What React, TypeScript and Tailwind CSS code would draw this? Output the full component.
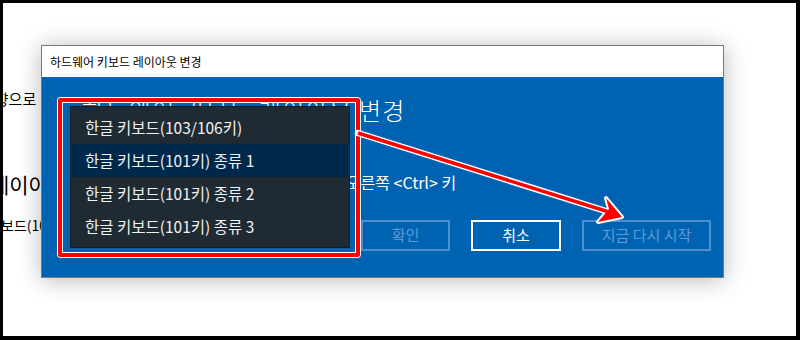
const KR = "font-['Noto_Sans_CJK_KR','Noto_Sans',sans-serif]";

const options = [
  '한글 키보드(103/106키)',
  '한글 키보드(101키) 종류 1',
  '한글 키보드(101키) 종류 2',
  '한글 키보드(101키) 종류 3',
];

export default function App() {
  return (
    <div className={`relative w-[800px] h-[340px] bg-black pt-[3px] pl-[3px] pr-[4px] pb-[4px] ${KR}`}>
      <div className="relative w-full h-full bg-white overflow-hidden">
        {/* page behind the dialog */}
        <div className="flex flex-col text-black">
          <div className="mt-[84px] -ml-[22px] text-[15px] leading-[24px]">방향으로</div>
          <div className="mt-[58px] -ml-[13px] text-[21px] leading-[30px]">레이아웃</div>
          <div className="mt-[16px] -ml-[2px] text-[14px] leading-[20px]">보드(101키)</div>
        </div>

        {/* dialog */}
        <div className="absolute left-[38px] top-[42px] w-[683px] h-[233px] flex flex-col border border-[#7a7a7a] shadow-[0_2px_22px_rgba(0,0,0,0.28)]">
          <div className="h-[31px] bg-white flex items-center pl-[8px] text-[12px] text-black">
            하드웨어 키보드 레이아웃 변경
          </div>
          <div className="relative flex-1 bg-[#0063b1] text-white flex flex-col pl-[40px] pr-[12px]">
            <div className="mt-[17px] text-[24px] leading-[32px] font-light tracking-[1.3px]">
              하드웨어 키보드 레이아웃 변경
            </div>
            <div className="mt-[45px] pl-[208px] text-[16px] leading-[22px]">
              한자 키: 오른쪽 &lt;Ctrl&gt; 키
            </div>
            <div className="mt-[27px] flex justify-end gap-[21px] text-[15px]">
              <button className="w-[89px] h-[31px] border-2 border-[#4a8fd0] text-[#5f9bd6]">확인</button>
              <button className="w-[90px] h-[31px] border-2 border-white text-white">취소</button>
              <button className="w-[129px] h-[31px] border-2 border-[#4a8fd0] text-[#5f9bd6]">지금 다시 시작</button>
            </div>

            {/* open dropdown */}
            <div className="absolute left-[28px] top-[29px] w-[280px] h-[142px] bg-[#1f2a33] border border-[#161c22] px-[1px] py-[4px] flex flex-col">
              {options.map((o, i) => (
                <div
                  key={o}
                  className={`h-[33px] flex items-center pl-[13px] text-[15.5px] text-[#f2f2f2] ${i === 1 ? 'bg-[#00284a]' : ''}`}
                >
                  {o}
                </div>
              ))}
            </div>

            {/* red highlight box */}
            <div className="absolute left-[16px] top-[21px] w-[302px] h-[159px] rounded-[3px] border-[4px] border-[#ff0000] shadow-[0_0_0_1px_#ffffff,inset_0_0_0_1px_#ffffff]" />
          </div>
        </div>
      </div>

      {/* arrow annotation */}
      <svg className="absolute inset-0 pointer-events-none" width="800" height="340" viewBox="0 0 800 340">
        <line x1="358" y1="133" x2="612" y2="213" stroke="#ffffff" strokeWidth="6.5" strokeLinecap="round" />
        <polygon points="622,217 606,198 609,209 598,222" fill="#ffffff" stroke="#ffffff" strokeWidth="4" strokeLinejoin="round" />
        <line x1="358" y1="133" x2="612" y2="213" stroke="#ff0000" strokeWidth="3.5" />
        <polygon points="622,217 606,198 609,209 598,222" fill="#ff0000" />
      </svg>
    </div>
  );
}
